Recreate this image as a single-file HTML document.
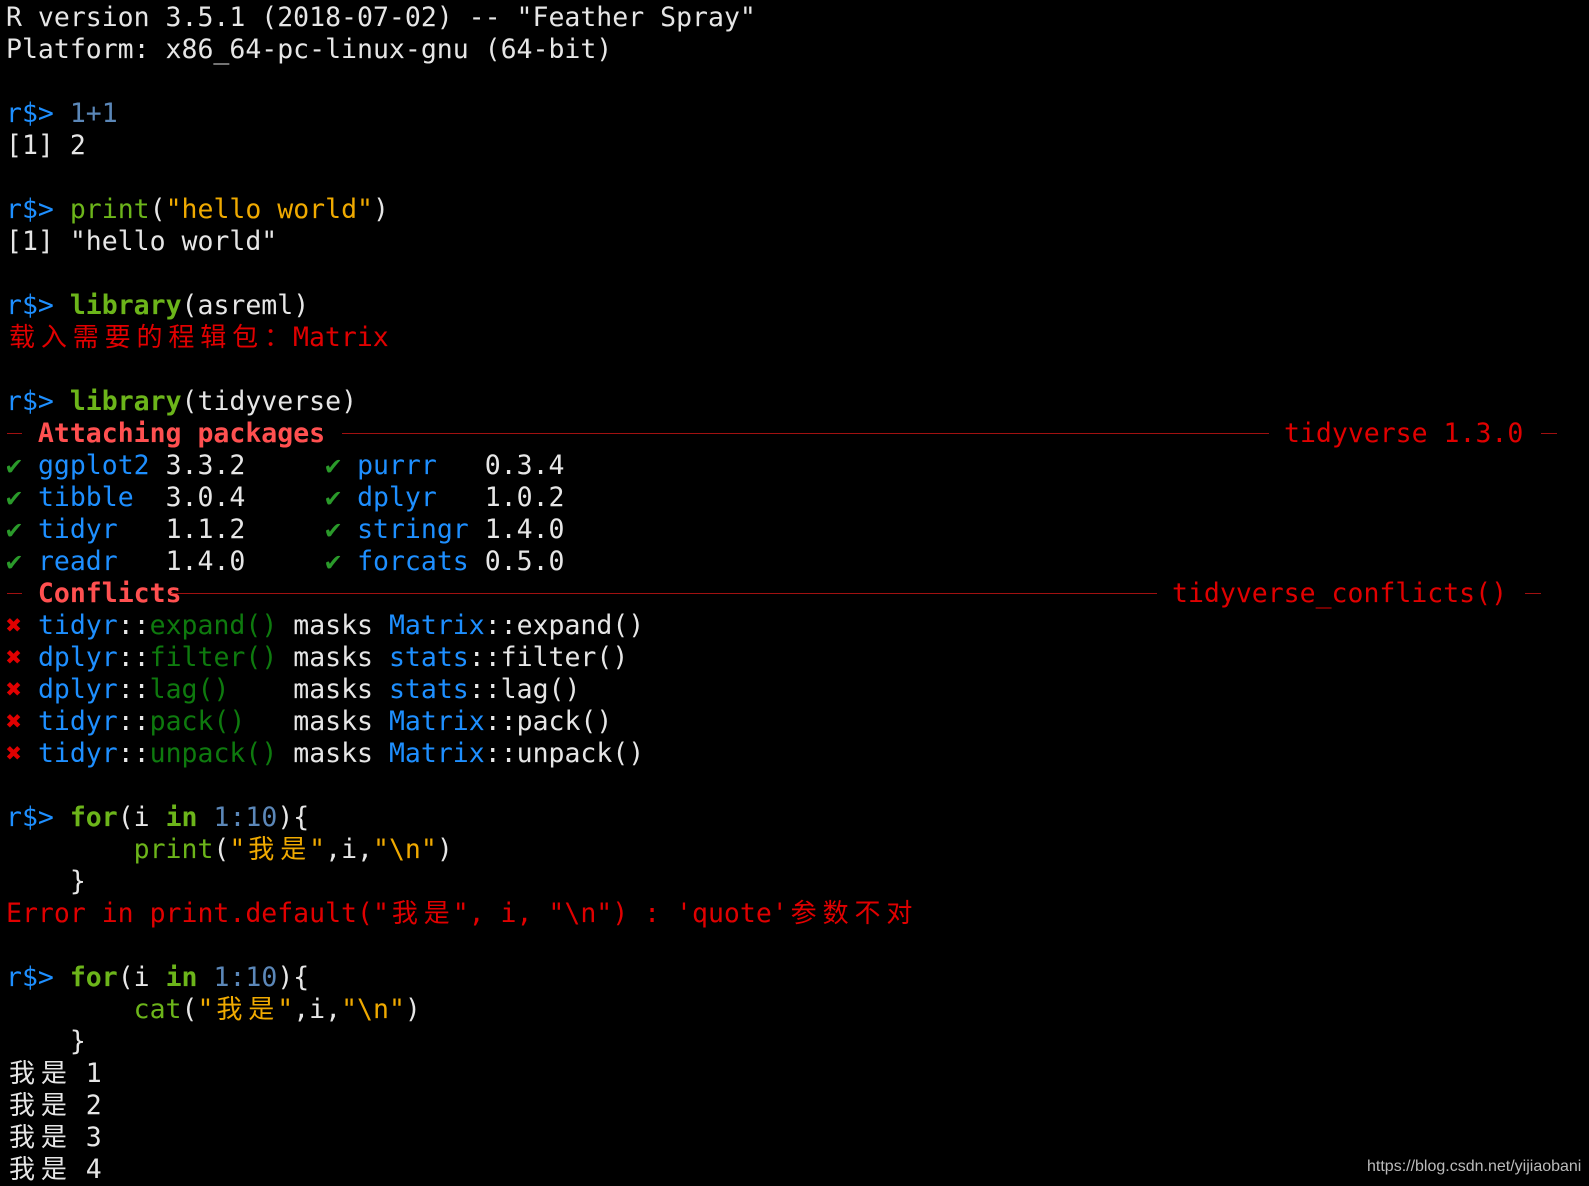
<!DOCTYPE html>
<html><head><meta charset="utf-8"><style>
html,body{margin:0;padding:0;background:#000;width:1589px;height:1185px;overflow:hidden}
.t{position:absolute;left:6px;top:2px;font-family:"DejaVu Sans Mono","Liberation Mono","Noto Sans CJK SC",monospace;font-size:26.5px;color:#e6e6e6;white-space:normal}
.t div{height:32px;line-height:32px;overflow:visible;white-space:pre}
.p{color:#1e8fff}.n{color:#5b87b8}.g{color:#6cb51a;font-weight:bold}.gf{color:#6cb51a}.s{color:#f0aa00}
.r{color:#e00000}.rb{color:#ff5050;font-weight:bold}.b{color:#1e8fff}.c{color:#2a9a2a}.dg{color:#0e7a0e}.x{color:#e00000;font-weight:bold}
.z{font-family:"Noto Sans CJK SC",sans-serif;display:inline-block;width:31.9px;text-align:center;line-height:20px;height:20px;font-size:26px}
.hr{position:absolute;height:1px;background:#a01010}
.ab{position:absolute;font-family:"DejaVu Sans Mono","Liberation Mono",monospace;font-size:26.5px;line-height:32px;white-space:pre;color:#e00000}
.wm{position:absolute;left:1367px;top:1158px;font-family:"Liberation Sans",sans-serif;font-size:16px;color:#bbb}
</style></head><body>
<div class="t"><div>R version 3.5.1 (2018-07-02) -- "Feather Spray"</div><div>Platform: x86_64-pc-linux-gnu (64-bit)</div><div></div><div><span class="p">r$&gt;</span> <span class="n">1+1</span></div><div>[1] 2</div><div></div><div><span class="p">r$&gt;</span> <span class="gf">print</span>(<span class="s">"hello world"</span>)</div><div>[1] "hello world"</div><div></div><div><span class="p">r$&gt;</span> <span class="g">library</span>(asreml)</div><div class="r"><span class="z">载</span><span class="z">入</span><span class="z">需</span><span class="z">要</span><span class="z">的</span><span class="z">程</span><span class="z">辑</span><span class="z">包</span><span class="z">：</span>Matrix</div><div></div><div><span class="p">r$&gt;</span> <span class="g">library</span>(tidyverse)</div><div>  <span class="rb">Attaching packages</span></div><div><span class="c">✔</span> <span class="b">ggplot2</span> 3.3.2     <span class="c">✔</span> <span class="b">purrr  </span> 0.3.4</div><div><span class="c">✔</span> <span class="b">tibble </span> 3.0.4     <span class="c">✔</span> <span class="b">dplyr  </span> 1.0.2</div><div><span class="c">✔</span> <span class="b">tidyr  </span> 1.1.2     <span class="c">✔</span> <span class="b">stringr</span> 1.4.0</div><div><span class="c">✔</span> <span class="b">readr  </span> 1.4.0     <span class="c">✔</span> <span class="b">forcats</span> 0.5.0</div><div>  <span class="rb">Conflicts</span></div><div><span class="x">✖</span> <span class="b">tidyr</span>::<span class="dg">expand()</span> masks <span class="b">Matrix</span>::expand()</div><div><span class="x">✖</span> <span class="b">dplyr</span>::<span class="dg">filter()</span> masks <span class="b">stats</span>::filter()</div><div><span class="x">✖</span> <span class="b">dplyr</span>::<span class="dg">lag()</span>    masks <span class="b">stats</span>::lag()</div><div><span class="x">✖</span> <span class="b">tidyr</span>::<span class="dg">pack()</span>   masks <span class="b">Matrix</span>::pack()</div><div><span class="x">✖</span> <span class="b">tidyr</span>::<span class="dg">unpack()</span> masks <span class="b">Matrix</span>::unpack()</div><div></div><div><span class="p">r$&gt;</span> <span class="g">for</span>(i <span class="g">in</span> <span class="n">1:10</span>){</div><div>        <span class="gf">print</span>(<span class="s">"<span class="z">我</span><span class="z">是</span>"</span>,i,<span class="s">"\n"</span>)</div><div>    }</div><div class="r">Error in print.default("<span class="z">我</span><span class="z">是</span>", i, "\n") : 'quote'<span class="z">参</span><span class="z">数</span><span class="z">不</span><span class="z">对</span></div><div></div><div><span class="p">r$&gt;</span> <span class="g">for</span>(i <span class="g">in</span> <span class="n">1:10</span>){</div><div>        <span class="gf">cat</span>(<span class="s">"<span class="z">我</span><span class="z">是</span>"</span>,i,<span class="s">"\n"</span>)</div><div>    }</div><div><span class="z">我</span><span class="z">是</span> 1</div><div><span class="z">我</span><span class="z">是</span> 2</div><div><span class="z">我</span><span class="z">是</span> 3</div><div><span class="z">我</span><span class="z">是</span> 4</div></div>
<div class="ab" style="left:1284px;top:418px">tidyverse 1.3.0</div>
<div class="ab" style="left:1172px;top:578px">tidyverse_conflicts()</div>
<div class="hr" style="left:7px;top:433px;width:15px"></div>
<div class="hr" style="left:342px;top:433px;width:927px"></div>
<div class="hr" style="left:1541px;top:433px;width:16px"></div>
<div class="hr" style="left:7px;top:593px;width:15px"></div>
<div class="hr" style="left:171px;top:593px;width:986px"></div>
<div class="hr" style="left:1525px;top:593px;width:16px"></div>
<div class="wm">https://blog.csdn.net/yijiaobani</div>
</body></html>
